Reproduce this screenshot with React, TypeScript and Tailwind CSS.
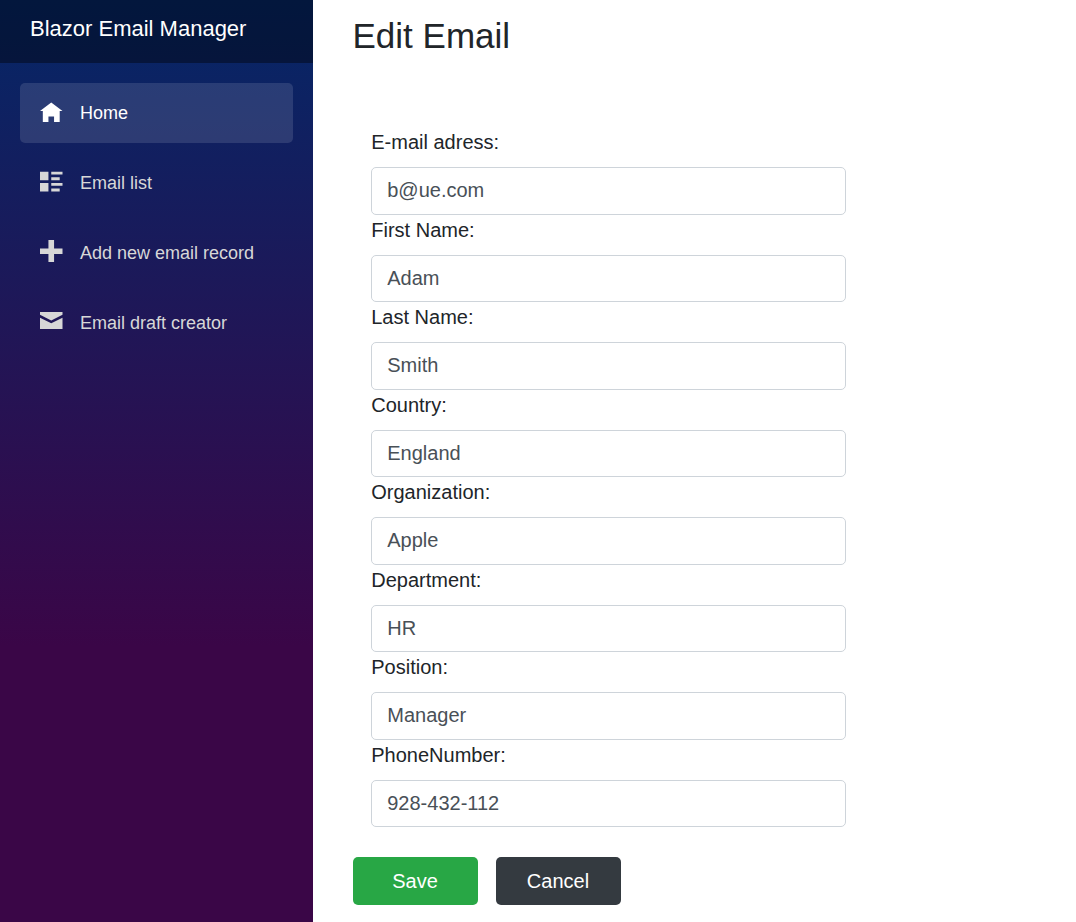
const fields = [
  ["E-mail adress:", "b@ue.com"],
  ["First Name:", "Adam"],
  ["Last Name:", "Smith"],
  ["Country:", "England"],
  ["Organization:", "Apple"],
  ["Department:", "HR"],
  ["Position:", "Manager"],
  ["PhoneNumber:", "928-432-112"],
];

const nav = [
  { label: "Home", box: "0 -0.9 8 8", d: "M4 0l-4 3h1v4h2v-2h2v2h2v-4.030l1 .030-4-3z", active: true },
  { label: "Email list", box: "0 -0.6 8 8", d: "M0 0v3h3v-3h-3zm4 0v1h4v-1h-4zm0 2v1h3v-1h-3zm-4 2v3h3v-3h-3zm4 0v1h4v-1h-4zm0 2v1h3v-1h-3z", active: false },
  { label: "Add new email record", box: "0 0 8 8", d: "M3 0v3h-3v2h3v3h2v-3h3v-2h-3v-3h-2z", active: false },
  { label: "Email draft creator", box: "0 -0.73 8 8", d: "M0 0v1l4 2 4-2v-1h-8zm0 2v4h8v-4l-4 2-4-2z", active: false },
];

export default function App() {
  return (
    <div className="flex h-[922px] overflow-hidden bg-white font-['Liberation_Sans',Arial,sans-serif] text-[20px] leading-[30px] text-[#212529]">
      <aside className="w-[312.5px] shrink-0 bg-[linear-gradient(180deg,#052767_0%,#3a0647_70%)]">
        <div className="h-[62.5px] bg-black/40 pl-[30px] pt-[14px] text-[22px] leading-[30px] text-white">Blazor Email Manager</div>
        <nav className="flex flex-col gap-[10px] px-5 pt-5">
          {nav.map((n) => (
            <a
              key={n.label}
              className={`flex h-[60px] items-center rounded-[5px] pl-5 text-[18px] ${n.active ? "bg-white/[0.12] text-white" : "text-[#d7d7d7]"}`}
            >
              <svg viewBox={n.box} className="mr-[17.5px] -mt-[3px] h-[22.5px] w-[22.5px] shrink-0 fill-current">
                <path d={n.d} />
              </svg>
              {n.label}
            </a>
          ))}
        </nav>
      </aside>
      <main className="flex-1 pl-10">
        <h1 className="mt-[15px] h-[112px] text-[35px] font-normal leading-[42px]">Edit Email</h1>
        <form className="flex flex-col">
          {fields.map(([label, value]) => (
            <div key={label} className="ml-[18.75px] w-[475px]">
              <label className="mb-[10px] block">{label}</label>
              <input
                readOnly
                value={value}
                className="block h-[47.5px] w-full rounded-[5px] border border-[#ced4da] bg-white px-[15px] text-[#495057] outline-none"
              />
            </div>
          ))}
          <div className="mt-[30px] flex gap-[18px]">
            <button type="button" className="h-[48px] w-[125px] rounded-[5px] bg-[#28a745] text-white">Save</button>
            <button type="button" className="h-[48px] w-[125px] rounded-[5px] bg-[#343a40] text-white">Cancel</button>
          </div>
        </form>
      </main>
    </div>
  );
}
